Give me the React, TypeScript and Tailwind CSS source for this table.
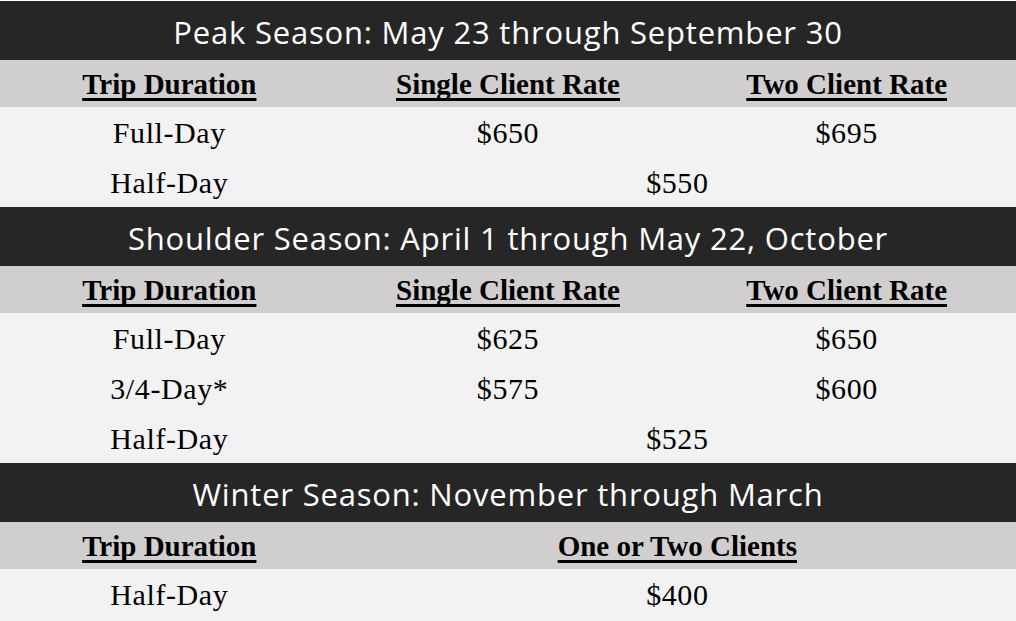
import React from "react";

const serif = "font-['Liberation_Serif','Times_New_Roman',serif]";
const uline = "underline decoration-[3px] underline-offset-[4px] [text-decoration-skip-ink:none]";

function SeasonBar({ title }: { title: string }) {
  return (
    <div className="h-[59px] bg-[#262626] flex items-center justify-center pt-[4px]">
      <span className="font-['Open_Sans','Noto_Sans',sans-serif] text-white text-[31px] tracking-[0.8px] leading-none">
        {title}
      </span>
    </div>
  );
}

function HeadRow({ cols }: { cols: [string, string, string?] }) {
  const [a, b, c] = cols;
  return (
    <div className={`h-[47px] bg-[#d0cece] grid grid-cols-3 items-center text-center pt-[2px] ${serif} text-[29px] leading-none font-bold text-black`}>
      <span><span className={uline}>{a}</span></span>
      {c ? (
        <>
          <span><span className={uline}>{b}</span></span>
          <span><span className={uline}>{c}</span></span>
        </>
      ) : (
        <span className="col-span-2"><span className={uline}>{b}</span></span>
      )}
    </div>
  );
}

function Row({ cols }: { cols: [string, string, string?] }) {
  const [a, b, c] = cols;
  return (
    <div className={`h-[50px] grid grid-cols-3 items-center text-center pt-[2px] ${serif} text-[30px] tracking-[0.6px] leading-none text-black`}>
      <span>{a}</span>
      {c ? (
        <>
          <span>{b}</span>
          <span>{c}</span>
        </>
      ) : (
        <span className="col-span-2">{b}</span>
      )}
    </div>
  );
}

export default function App() {
  return (
    <div className="w-[1016px] h-[621px] bg-[#f2f2f2] overflow-hidden flex flex-col">
      <div className="h-px bg-white" />
      <SeasonBar title="Peak Season: May 23 through September 30" />
      <HeadRow cols={["Trip Duration", "Single Client Rate", "Two Client Rate"]} />
      <Row cols={["Full-Day", "$650", "$695"]} />
      <Row cols={["Half-Day", "$550"]} />
      <SeasonBar title="Shoulder Season: April 1 through May 22, October" />
      <HeadRow cols={["Trip Duration", "Single Client Rate", "Two Client Rate"]} />
      <Row cols={["Full-Day", "$625", "$650"]} />
      <Row cols={["3/4-Day*", "$575", "$600"]} />
      <Row cols={["Half-Day", "$525"]} />
      <SeasonBar title="Winter Season: November through March" />
      <HeadRow cols={["Trip Duration", "One or Two Clients"]} />
      <Row cols={["Half-Day", "$400"]} />
    </div>
  );
}
